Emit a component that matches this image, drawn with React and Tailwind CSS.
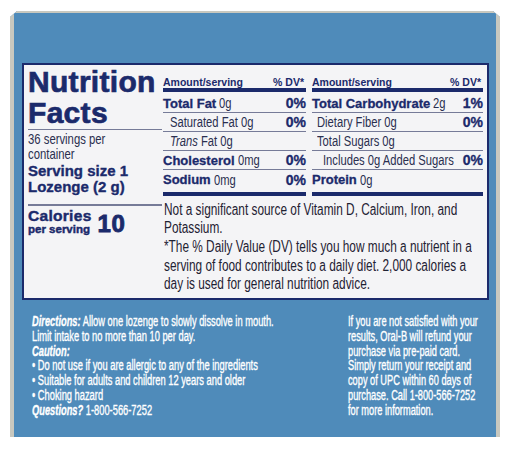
const sans = "font-['Liberation_Sans',Arial,sans-serif]";
const heavy = "font-['Liberation_Sans',Arial,sans-serif] font-bold";
const navy = "text-[#1b2a6b]";

// condensed look: Liberation Sans squeezed horizontally
const Cond = ({ children, className = "" }) => (
  <span className={`inline-block whitespace-nowrap origin-left ${className}`}>{children}</span>
);
const Line = ({ children, className = "" }) => (
  <div className={`whitespace-nowrap origin-left ${className}`}>{children}</div>
);

const Row = ({ bold, text, amount, italic, indent = "", dv, last }) => (
  <div
    className={`flex items-center h-[19px] ${
      last ? "" : "border-b border-[#767b98]"
    }`}
  >
    <div className={`flex-1 min-w-0 flex items-center whitespace-nowrap leading-none ${indent}`}>
      {bold && (
        <span className={`${heavy} ${navy} text-[13px] [-webkit-text-stroke:0.3px_#1b2a6b]`}>{bold}</span>
      )}
      {bold && amount && (
        <Cond className={`${sans} text-[14px] text-[#2a2f4f] scale-x-[0.8] ml-[3px]`}>{amount}</Cond>
      )}
      {!bold && (
        <Cond className={`${sans} text-[14px] text-[#2a2f4f] scale-x-[0.8]`}>
          {italic && <i>{italic} </i>}
          {text}
        </Cond>
      )}
    </div>
    {dv && (
      <span className={`shrink-0 ${heavy} ${navy} text-[14px] leading-none [-webkit-text-stroke:0.3px_#1b2a6b]`}>{dv}</span>
    )}
  </div>
);

const Table = ({ rows, width }) => (
  <div className={`flex flex-col shrink-0 ${width}`}>
    <div className={`flex justify-between items-end h-[12px] pr-[2px] ${heavy} ${navy} text-[10.5px] leading-none`}>
      <span>Amount/serving</span>
      <span>% DV*</span>
    </div>
    <div className="h-[4px] bg-[#1b2a6b] mt-[1px]" />
    <div className="mt-[2px]">
      {rows.map((r, i) => (
        <Row key={i} {...r} last={i === rows.length - 1} />
      ))}
    </div>
    <div className="h-[4px] bg-[#1b2a6b] mt-[3px]" />
  </div>
);

export default function App() {
  const left = [
    { bold: "Total Fat", amount: "0g", dv: "0%" },
    { text: "Saturated Fat 0g", indent: "pl-[7px]", dv: "0%" },
    { text: "Fat 0g", italic: "Trans", indent: "pl-[7px]" },
    { bold: "Cholesterol", amount: "0mg", dv: "0%" },
    { bold: "Sodium", amount: "0mg", dv: "0%" },
  ];
  const right = [
    { bold: "Total Carbohydrate", amount: "2g", dv: "1%" },
    { text: "Dietary Fiber 0g", indent: "pl-[5px]", dv: "0%" },
    { text: "Total Sugars 0g", indent: "pl-[5px]" },
    { text: "Includes 0g Added Sugars", indent: "pl-[11px]", dv: "0%" },
    { bold: "Protein", amount: "0g" },
  ];

  return (
    <div className="w-[514px] h-[449px] bg-white pt-[11px] pl-[10px] overflow-hidden">
      <div className="w-[490px] h-[426px] bg-[#4f8bba] border-x-4 border-t-2 border-[#c8c8bf] [clip-path:polygon(7px_0,calc(100%-7px)_0,100%_6px,100%_100%,0_100%,0_6px)] pt-[50px] pl-[8px] overflow-hidden">
        <div className="w-[467px] h-[237px] bg-[#f4f4f6] border-2 border-[#1b2a6b] flex pl-[4px] pr-[4px] overflow-hidden">
          <div className={`w-[134px] shrink-0 flex flex-col ${navy}`}>
            <div className={`${heavy} text-[30px] leading-[31px] tracking-[0.3px] [-webkit-text-stroke:0.7px_#1b2a6b] pt-[1px]`}>
              Nutrition
              <br />
              Facts
            </div>
            <div className="h-px bg-[#767b98] mt-[1px]" />
            <div className={`${sans} text-[14.5px] leading-[15px] text-[#2a2f4f] pt-[2px]`}>
              <Line className="scale-x-[0.78]">36 servings per</Line>
              <Line className="scale-x-[0.78]">container</Line>
            </div>
            <div className={`${heavy} text-[15px] leading-[16px] pt-[1px] [-webkit-text-stroke:0.35px_#1b2a6b]`}>
              Serving size 1
              <br />
              Lozenge (2 g)
            </div>
            <div className="h-[1.5px] bg-[#767b98] mt-[9px]" />
            <div className="flex items-start gap-[6px] pt-[2px]">
              <div className={`${heavy} [-webkit-text-stroke:0.45px_#1b2a6b]`}>
                <div className="text-[15.5px] leading-[15px] tracking-[0.3px]">Calories</div>
                <div className="text-[11.5px] leading-[12px]">per serving</div>
              </div>
              <div className={`${heavy} text-[24px] leading-none pt-[4px] tracking-[0.5px] [-webkit-text-stroke:0.9px_#1b2a6b]`}>10</div>
            </div>
          </div>
          <div className="flex-1 min-w-0 flex flex-col pl-[1px] pt-[10px]">
            <div className="flex gap-[6px]">
              <Table rows={left} width="w-[143px]" />
              <Table rows={right} width="w-[171px]" />
            </div>
            <div className={`${sans} text-[16px] leading-[18.7px] text-[#1f2233] pt-[4.5px] pl-[1px]`}>
              <Line className="scale-x-[0.74]">Not a significant source of Vitamin D, Calcium, Iron, and</Line>
              <Line className="scale-x-[0.74]">Potassium.</Line>
              <Line className="scale-x-[0.74]">*The % Daily Value (DV) tells you how much a nutrient in a</Line>
              <Line className="scale-x-[0.74]">serving of food contributes to a daily diet. 2,000 calories a</Line>
              <Line className="scale-x-[0.74]">day is used for general nutrition advice.</Line>
            </div>
          </div>
        </div>
        <div className={`flex text-white ${sans} text-[14px] leading-[14.8px] pt-[14px] [-webkit-text-stroke:0.35px_white]`}>
          <div className="w-[326px] shrink-0 pl-[10px]">
            <Line className="scale-x-[0.665]">
              <b><i>Directions:</i></b> Allow one lozenge to slowly dissolve in mouth.
            </Line>
            <Line className="scale-x-[0.665]">Limit intake to no more than 10 per day.</Line>
            <Line className="scale-x-[0.665]">
              <b><i>Caution:</i></b>
            </Line>
            <Line className="scale-x-[0.665]">• Do not use if you are allergic to any of the ingredients</Line>
            <Line className="scale-x-[0.665]">• Suitable for adults and children 12 years and older</Line>
            <Line className="scale-x-[0.665]">• Choking hazard</Line>
            <Line className="scale-x-[0.665]">
              <b><i>Questions?</i></b> 1-800-566-7252
            </Line>
          </div>
          <div className="w-[135px] shrink-0">
            <Line className="scale-x-[0.66]">If you are not satisfied with your</Line>
            <Line className="scale-x-[0.66]">results, Oral-B will refund your</Line>
            <Line className="scale-x-[0.66]">purchase via pre-paid card.</Line>
            <Line className="scale-x-[0.66]">Simply return your receipt and</Line>
            <Line className="scale-x-[0.66]">copy of UPC within 60 days of</Line>
            <Line className="scale-x-[0.66]">purchase. Call 1-800-566-7252</Line>
            <Line className="scale-x-[0.66]">for more information.</Line>
          </div>
        </div>
      </div>
    </div>
  );
}
